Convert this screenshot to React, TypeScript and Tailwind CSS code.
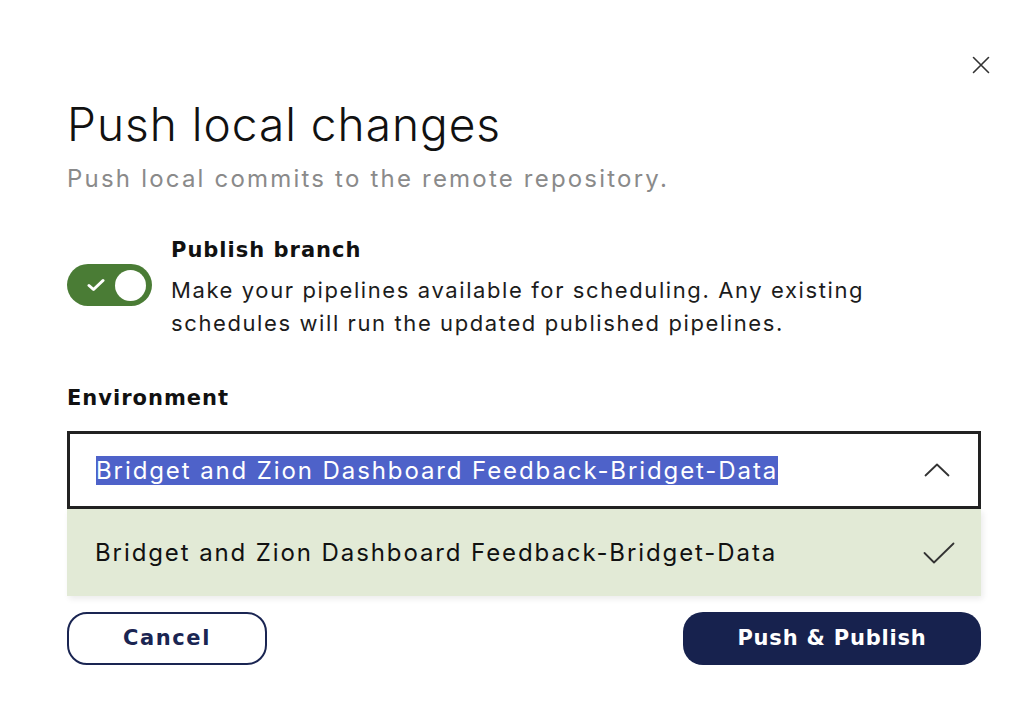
import { useState } from 'react'

const OPTION = 'Bridget and Zion Dashboard Feedback-Bridget-Data'

export default function App() {
	const [published, setPublished] = useState(true)

	return (
		<main className="relative h-[705px] w-full overflow-hidden bg-white font-['Inter','Liberation_Sans',sans-serif] text-[#111]">
			{/* close */}
			<button className="absolute right-[33px] top-[55px] flex h-[20px] w-[20px] items-center justify-center text-[#333]">
				<svg width="18" height="18" viewBox="0 0 18 18" fill="none" stroke="currentColor" strokeWidth="1.6" strokeLinecap="round">
					<path d="M1.5 1.5 L16.5 16.5 M16.5 1.5 L1.5 16.5" />
				</svg>
			</button>

			<div className="flex flex-col pl-[67px] pr-[43px] pt-[96px]">
				<h1 className="text-[46px] font-light leading-[56px] tracking-[1px] text-[#111]">
					Push local changes
				</h1>
				<p className="mt-[11px] text-[24px] leading-[32px] tracking-[2.2px] text-[#8a8a8a]">
					Push local commits to the remote repository.
				</p>

				<div className="mt-[41px] flex items-start gap-[19px]">
					<button
						onClick={() => setPublished(!published)}
						className="mt-[28px] flex h-[42px] w-[85px] shrink-0 items-center justify-between rounded-full bg-[#4a7c35] pl-[20px] pr-[6px]"
					>
						<svg width="18" height="14" viewBox="0 0 18 14" fill="none" stroke="white" strokeWidth="3" strokeLinecap="round" strokeLinejoin="round">
							<path d="M2 7.5 L6.5 11.5 L16 2.5" />
						</svg>
						<span className="h-[31px] w-[31px] rounded-full bg-white" />
					</button>
					<div className="flex flex-col">
						<div className="font-['DejaVu_Sans',sans-serif] text-[21px] font-bold leading-[28px] tracking-[1px] text-[#111]">
							Publish branch
						</div>
						<p className="mt-[10px] text-[22px] leading-[33px] tracking-[1.6px] text-[#1c1c1c]">
							Make your pipelines available for scheduling. Any existing
							<br />
							schedules will run the updated published pipelines.
						</p>
					</div>
				</div>

				<label className="mt-[44px] font-['DejaVu_Sans',sans-serif] text-[21px] font-bold leading-[28px] tracking-[1px] text-[#111]">
					Environment
				</label>

				<div className="mt-[19px] flex flex-col">
					<div className="flex h-[78px] items-center justify-between border-[3px] border-[#222] bg-white pl-[26px] pr-[28px]">
						<span className="bg-[#4e62c9] text-[24px] leading-[29px] tracking-[1.9px] text-white">{OPTION}</span>
						<svg width="26" height="14" viewBox="0 0 26 14" fill="none" stroke="#333" strokeWidth="1.8" strokeLinecap="round" strokeLinejoin="round">
							<path d="M1.5 12.5 L13 1.5 L24.5 12.5" />
						</svg>
					</div>
					<div className="flex h-[87px] items-center justify-between bg-[#e2ead6] pl-[28px] pr-[26px] shadow-[2px_3px_6px_rgba(0,0,0,0.08)]">
						<span className="text-[24px] leading-[29px] tracking-[1.9px] text-[#111]">{OPTION}</span>
						<svg width="32" height="22" viewBox="0 0 32 22" fill="none" stroke="#333" strokeWidth="1.8" strokeLinecap="round" strokeLinejoin="round">
							<path d="M1.5 11 L11 20.5 L30.5 1.5" />
						</svg>
					</div>
				</div>

				<div className="mt-[16px] flex items-center justify-between font-['DejaVu_Sans',sans-serif]">
					<button className="h-[53px] w-[200px] rounded-[20px] border-2 border-[#1a2552] text-[21px] font-bold tracking-[1.6px] text-[#1a2552]">
						Cancel
					</button>
					<button className="h-[53px] w-[298px] rounded-[20px] bg-[#17224e] text-[21px] font-bold tracking-[0.8px] text-white">
						Push &amp; Publish
					</button>
				</div>
			</div>
		</main>
	)
}
